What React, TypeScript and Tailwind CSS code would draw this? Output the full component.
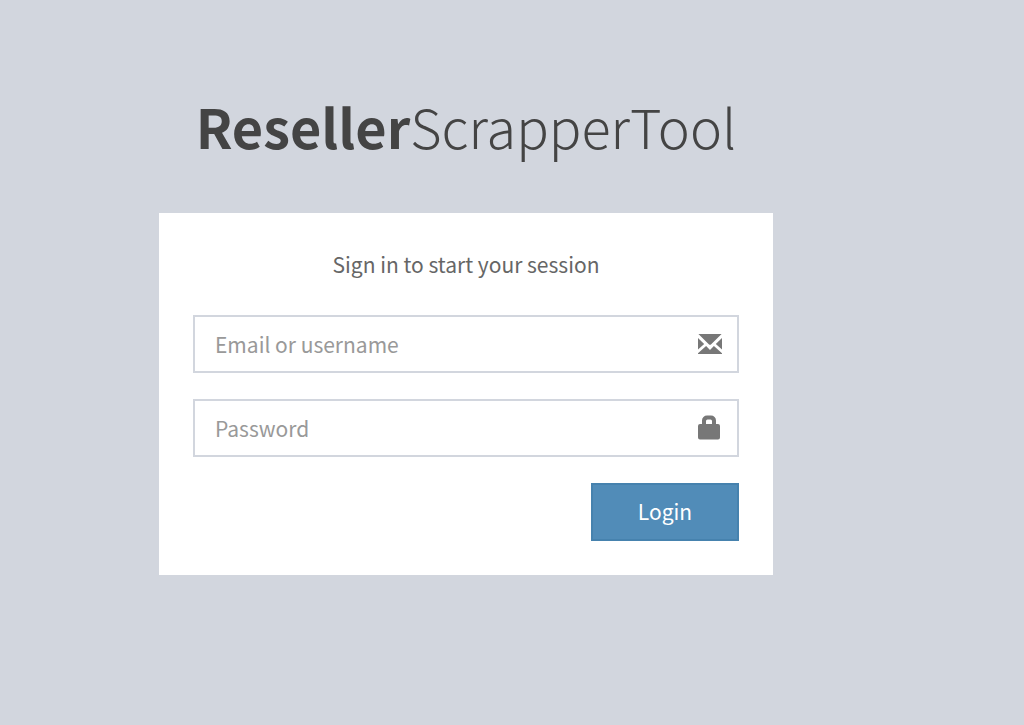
import type { InputHTMLAttributes, ReactNode } from "react";

function EnvelopeIcon() {
  return (
    <svg viewBox="0 0 24 20" className="w-6 h-5" fill="currentColor" aria-hidden="true">
      <path d="M.4 0h23.200L13.200 10.200a1.700 1.700 0 0 1-2.400 0z" />
      <path d="M0 4 6.200 10 0 15.600z" />
      <path d="M24 4 17.800 10l6.200 5.600z" />
      <path d="M0 20v-.8L8.100 12l3.900 3.900 3.900-3.900 8.100 7.200v.8z" />
    </svg>
  );
}

function LockIcon() {
  return (
    <svg viewBox="0 0 24 26" className="w-6 h-[26px]" fill="currentColor" aria-hidden="true">
      <path
        fillRule="evenodd"
        d="M4 9V5.500A5 5 0 0 1 9 .5h4a5 5 0 0 1 5 5V9h2a2 2 0 0 1 2 2v11.500a2 2 0 0 1-2 2H2a2 2 0 0 1-2-2V11a2 2 0 0 1 2-2zM8 9h6V6a1.500 1.500 0 0 0-1.500-1.500h-3A1.500 1.500 0 0 0 8 6z"
      />
    </svg>
  );
}

type FieldProps = InputHTMLAttributes<HTMLInputElement> & { icon: ReactNode };

function Field({ icon, ...props }: FieldProps) {
  return (
    <div className="relative mb-[26px]">
      <input
        {...props}
        aria-label={props.placeholder}
        className="block w-full h-[58px] pl-5 pr-16 border-2 border-[#d2d6de] bg-white text-[21px] text-[#555] placeholder:text-[#999] outline-none focus:border-[#3c8dbc]"
      />
      <span className="absolute inset-y-0 right-[17px] flex items-center pointer-events-none text-[#777]">
        {icon}
      </span>
    </div>
  );
}

export default function App() {
  return (
    <div className="min-h-screen bg-[#d2d6de] pl-[159px] pr-[251px] pt-[84px] pb-12 font-['Noto_Sans_CJK_SC',sans-serif]">
      <main className="w-full min-w-[400px]">
        <h1 className="mb-[45px] text-center text-[54px] leading-[84px] font-light text-[#444]">
          <a href="#">
            <b className="font-bold">Reseller</b>ScrapperTool
          </a>
        </h1>

        <div className="bg-white p-[34px]">
          <p className="mb-[34px] text-center text-[21px] leading-[34px] text-[#666]">
            Sign in to start your session
          </p>

          <form onSubmit={(e) => e.preventDefault()}>
            <Field type="text" name="login" placeholder="Email or username" icon={<EnvelopeIcon />} />
            <Field type="password" name="password" placeholder="Password" icon={<LockIcon />} />
            <div className="flex justify-end">
              <button
                type="submit"
                className="w-[148px] h-[58px] border-2 border-[#4682ae] bg-[#518cb8] text-[21px] text-white cursor-pointer"
              >
                Login
              </button>
            </div>
          </form>
        </div>
      </main>
    </div>
  );
}
